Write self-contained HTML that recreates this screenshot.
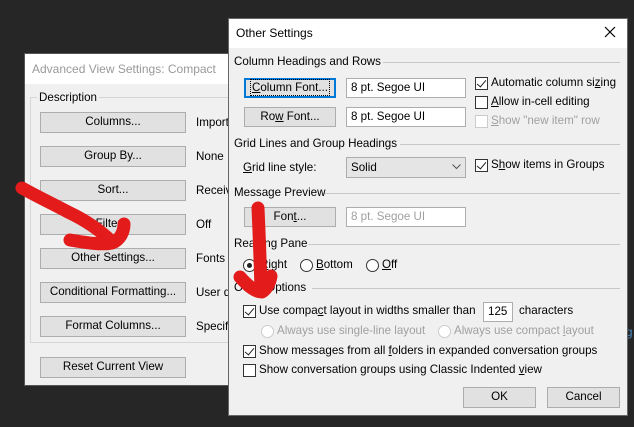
<!DOCTYPE html>
<html><head><style>
body{margin:0;width:634px;height:427px;background:#262626;position:relative;overflow:hidden;font-family:"Liberation Sans",sans-serif;font-size:11.6px;line-height:14px;color:#000}
.a{position:absolute;white-space:nowrap}
.btn{position:absolute;background:#e1e1e1;border:1px solid #adadad;box-sizing:border-box;text-align:center;line-height:18px}
.tb{position:absolute;background:#fff;border:1px solid #adadad;box-sizing:border-box;padding-left:4px;line-height:18px}
.cb{position:absolute;width:13px;height:13px;border:1px solid #333;box-sizing:border-box;background:#fff}
.cb.c::after{content:"";position:absolute;left:3px;top:0px;width:4px;height:8px;border:solid #222;border-width:0 1.5px 1.5px 0;transform:rotate(40deg)}
.rd{position:absolute;width:13px;height:13px;border:1px solid #333;border-radius:50%;box-sizing:border-box;background:#fff}
.hl{position:absolute;height:1px;background:#c8c8c8}
u{text-decoration:underline}
.dis{color:#a0a0a0}
</style></head><body>
<div class="a" style="left:24px;top:53px;width:210px;height:333px;background:#f0f0f0;border:1px solid #555;box-sizing:border-box"></div>
<div class="a" style="left:25px;top:54px;width:208px;height:30px;background:#fff"></div>
<div class="a" style="left:32px;top:62px;color:#999;font-size:12px">Advanced View Settings: Compact</div>
<div class="a" style="left:30px;top:97px;width:200px;height:246px;border:1px solid #d5d5d5;box-sizing:border-box"></div>
<div class="a" style="left:37px;top:91px;background:#f0f0f0;padding:0 2px">Description</div>
<div class="btn" style="left:40px;top:112px;width:146px;height:21px">Columns...</div>
<div class="btn" style="left:40px;top:146px;width:146px;height:21px">Group By...</div>
<div class="btn" style="left:40px;top:180px;width:146px;height:21px">Sort...</div>
<div class="btn" style="left:40px;top:214px;width:146px;height:21px">Filter...</div>
<div class="btn" style="left:40px;top:248px;width:146px;height:21px">Other Settings...</div>
<div class="btn" style="left:40px;top:282px;width:146px;height:21px">Conditional Formatting...</div>
<div class="btn" style="left:40px;top:316px;width:146px;height:21px">Format Columns...</div>
<div class="btn" style="left:40px;top:357px;width:146px;height:21px">Reset Current View</div>
<div class="a" style="left:196px;top:116px">Import</div>
<div class="a" style="left:196px;top:150px">None</div>
<div class="a" style="left:196px;top:184px">Receiv</div>
<div class="a" style="left:196px;top:218px">Off</div>
<div class="a" style="left:196px;top:252px">Fonts</div>
<div class="a" style="left:196px;top:286px">User d</div>
<div class="a" style="left:196px;top:320px">Specif</div>
<div class="a" style="left:626px;top:326px;color:#4a8ac8">g</div>

<div class="a" style="left:228px;top:18px;width:400px;height:398px;background:#f0f0f0;border:1px solid #666;box-sizing:border-box"></div>
<div class="a" style="left:229px;top:19px;width:398px;height:29px;background:#fff"></div>
<div class="a" style="left:236px;top:26px;font-size:12px">Other Settings</div>
<svg class="a" style="left:604px;top:26px" width="12" height="12"><path d="M1 1L11 11M11 1L1 11" stroke="#000" stroke-width="1.2"/></svg>

<div class="hl" style="left:383px;top:62px;width:237px"></div>
<div class="a" style="left:234px;top:55px">Column Headings and Rows</div>
<div class="btn" style="left:244px;top:78px;width:92px;height:20px;border:2px solid #0078d7;line-height:16px"><span style="outline:1px dotted #000;outline-offset:1px"><u>C</u>olumn Font...</span></div>
<div class="tb" style="left:346px;top:78px;width:120px;height:20px">8 pt. Segoe UI</div>
<div class="btn" style="left:244px;top:107px;width:92px;height:20px">Ro<u>w</u> Font...</div>
<div class="tb" style="left:346px;top:107px;width:120px;height:20px">8 pt. Segoe UI</div>
<div class="cb c" style="left:475px;top:77px"></div><div class="a" style="left:491px;top:76px">Automatic column si<u>z</u>ing</div>
<div class="cb" style="left:475px;top:96px"></div><div class="a" style="left:491px;top:95px"><u>A</u>llow in-cell editing</div>
<div class="cb" style="left:475px;top:115px;border-color:#ccc"></div><div class="a dis" style="left:491px;top:114px"><u>S</u>how "new item" row</div>

<div class="hl" style="left:400px;top:144px;width:220px"></div>
<div class="a" style="left:234px;top:137px">Grid Lines and Group Headings</div>
<div class="a" style="left:243px;top:161px"><u>G</u>rid line style:</div>
<div class="a" style="left:346px;top:157px;width:120px;height:21px;background:#e5e5e5;border:1px solid #adadad;box-sizing:border-box;padding-left:4px;line-height:19px">Solid</div>
<svg class="a" style="left:452px;top:164px" width="9" height="6"><path d="M0.5 0.5L4.5 4.5L8.5 0.5" stroke="#555" fill="none"/></svg>
<div class="cb c" style="left:475px;top:159px"></div><div class="a" style="left:491px;top:158px">S<u>h</u>ow items in Groups</div>

<div class="hl" style="left:324px;top:193px;width:296px"></div>
<div class="a" style="left:234px;top:186px">Message Preview</div>
<div class="btn" style="left:244px;top:207px;width:92px;height:20px">Fon<u>t</u>...</div>
<div class="tb dis" style="left:346px;top:207px;width:120px;height:20px">8 pt. Segoe UI</div>

<div class="hl" style="left:308px;top:244px;width:312px"></div>
<div class="a" style="left:234px;top:237px">Reading Pane</div>
<div class="rd" style="left:243px;top:259px"><div style="position:absolute;left:3px;top:3px;width:5px;height:5px;border-radius:50%;background:#222"></div></div><div class="a" style="left:260px;top:258px"><u>R</u>ight</div>
<div class="rd" style="left:300px;top:259px"></div><div class="a" style="left:316px;top:258px"><u>B</u>ottom</div>
<div class="rd" style="left:366px;top:259px"></div><div class="a" style="left:382px;top:258px"><u>O</u>ff</div>

<div class="hl" style="left:312px;top:288px;width:308px"></div>
<div class="a" style="left:234px;top:281px">Other Options</div>
<div class="cb c" style="left:243px;top:305px"></div><div class="a" style="left:259px;top:304px">Use compa<u>c</u>t layout in widths smaller than</div>
<div class="tb" style="left:483px;top:302px;width:30px;height:20px">125</div>
<div class="a" style="left:519px;top:304px">characters</div>
<div class="rd" style="left:261px;top:325px;border-color:#ccc"></div><div class="a dis" style="left:277px;top:324px">Always use single-line layout</div>
<div class="rd" style="left:438px;top:325px;border-color:#ccc"></div><div class="a dis" style="left:454px;top:324px">Always use compact <u>l</u>ayout</div>
<div class="cb c" style="left:243px;top:345px"></div><div class="a" style="left:259px;top:344px">Show messages from all <u>f</u>olders in expanded conversation groups</div>
<div class="cb" style="left:243px;top:364px"></div><div class="a" style="left:259px;top:363px">Show conversation groups using Classic Indented <u>v</u>iew</div>
<div class="btn" style="left:463px;top:387px;width:73px;height:21px">OK</div>
<div class="btn" style="left:547px;top:387px;width:73px;height:21px">Cancel</div>

<svg class="a" style="left:0;top:0" width="634" height="427">
<g stroke="#e31b1b" stroke-width="13" stroke-linecap="round" stroke-linejoin="round" fill="none">
<path d="M22 188C40 198 55 205 68 212C85 220 100 230 112 242"/>
<path d="M70 240C88 243 102 245 112 243C120 240 124 232 124 224"/>
<path d="M258 208C259 230 260 255 261 290"/>
<path d="M240 277C248 286 255 292 262 292C268 288 270 282 271 276"/>
</g>
</svg>
</body></html>
